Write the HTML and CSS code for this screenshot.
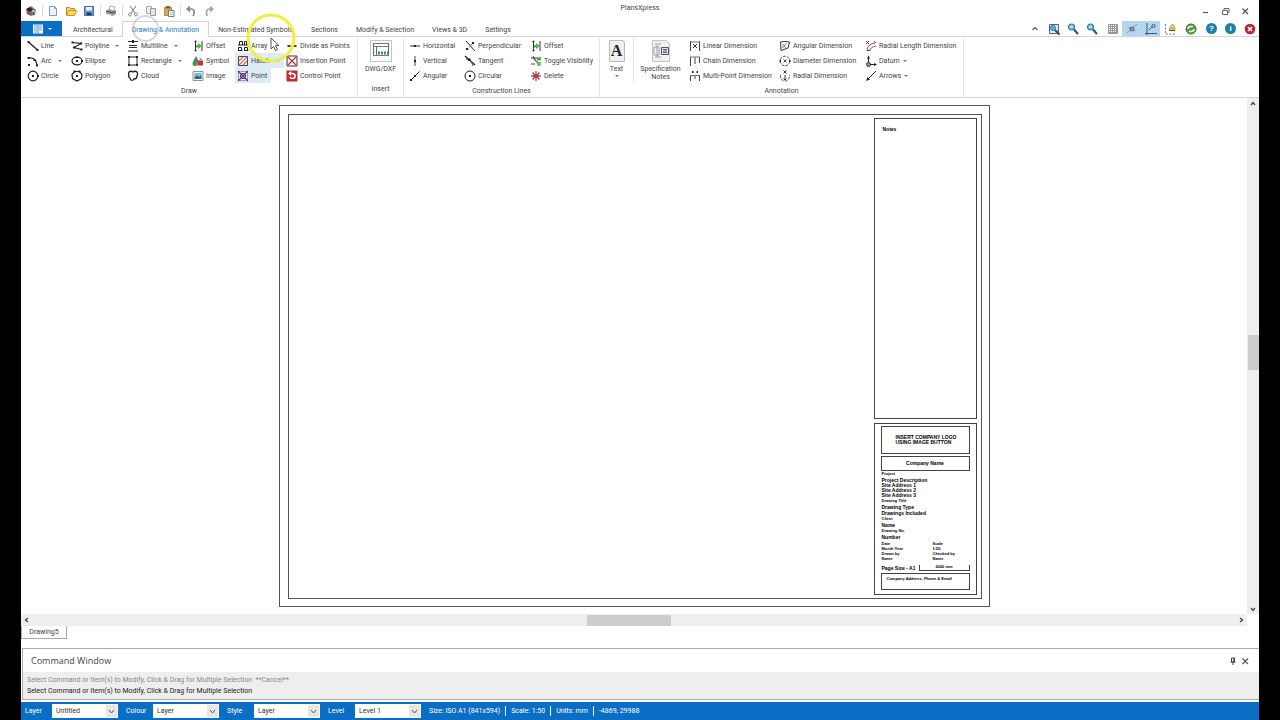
FILE: index.html
```
<!DOCTYPE html>
<html lang="en">
  <head>
    <meta charset="utf-8">
    <title>PlansXpress</title>
    <link rel="stylesheet" href="styles.css">
  </head>
  <body>
    <!-- icon sprite -->
    <svg class="sprite" aria-hidden="true">
      <symbol id="i-app" viewBox="0 0 12 12"><path d="M1 5l5-4 5 4-1 5-4 1-4-2z" fill="#77707c"/><path d="M1 4l4-2 3 3-4 2z" fill="#2c2630"/><path d="M7 5l4 1-1 4-3 1z" fill="#cfc4d8"/><path d="M2 7l3 1v2l-3-1z" fill="#a33a4c"/><path d="M7.500 7h2v3h-2z" fill="#444"/></symbol>
      <symbol id="i-new" viewBox="0 0 12 12"><path d="M2.500 1.500h5l2 2v7h-7z" fill="#eef5fc" stroke="#7f9fc0"/><path d="M7.500 1.500v2h2" fill="none" stroke="#7f9fc0"/></symbol>
      <symbol id="i-open" viewBox="0 0 12 12"><path d="M1.500 10V2.500h3l1 1h4v2" fill="#f5d77a" stroke="#b98c25"/><path d="M1.500 10.500l2-5h8l-2 5z" fill="#ffd65c" stroke="#c4932a"/></symbol>
      <symbol id="i-save" viewBox="0 0 12 12"><path d="M1.500 1.500h9v9h-9z" fill="#6d9fce" stroke="#44719f"/><path d="M3 2h6v3.500H3z" fill="#e9f1f8"/><path d="M3.500 7.500h5V10h-5z" fill="#1c3f66"/></symbol>
      <symbol id="i-print" viewBox="0 0 12 12"><path d="M4 5l1-4 5 1-1 4z" fill="#fff" stroke="#999" stroke-width=".8"/><path d="M1 6l3-2 7 2v3l-3 2-7-2z" fill="#9a9ea6"/><path d="M1 6l7 2 3-2" fill="none" stroke="#444"/><path d="M2 9l4 1.500" stroke="#eee"/></symbol>
      <symbol id="i-cut" viewBox="0 0 12 12"><path d="M3 1l5 7M9 1L4 8" stroke="#8b8f94" stroke-width="1.200"/><circle cx="3" cy="9.500" r="1.500" fill="none" stroke="#888"/><circle cx="9" cy="9.500" r="1.500" fill="none" stroke="#888"/></symbol>
      <symbol id="i-copy" viewBox="0 0 12 12"><path d="M1.500 1.500h5v7h-5z" fill="#eee" stroke="#aaa"/><path d="M5.500 3.500h5v7h-5z" fill="#e6e6ea" stroke="#999"/></symbol>
      <symbol id="i-paste" viewBox="0 0 12 12"><path d="M1.500 2.500h7v8h-7z" fill="#e3a93a" stroke="#b08a3a"/><path d="M3 1h4v2.500H3z" fill="#666"/><path d="M5.500 5.500h5.500v6H5.500z" fill="#fff" stroke="#5b7fa8"/><path d="M7 7.500h3M7 9.500h3" stroke="#8ba8c8" stroke-width=".7"/></symbol>
      <symbol id="i-undo" viewBox="0 0 12 12"><path d="M2 4h4q4 0 3 5l-1 2" fill="none" stroke="#85898f" stroke-width="1.700"/><path d="M1 4l4-3.500v7z" fill="#85898f"/></symbol>
      <symbol id="i-redo" viewBox="0 0 12 12"><path d="M10 4H7Q2 4 4 11" fill="none" stroke="#a2a5aa" stroke-width="1.700"/><path d="M11 4L7 .5v7z" fill="#a2a5aa"/></symbol>
      <symbol id="i-min" viewBox="0 0 12 12"><path d="M4 7.500h5" stroke="#555" stroke-width="1.200"/></symbol>
      <symbol id="i-restore" viewBox="0 0 12 12"><path d="M3.500 5.500h5v4h-5zM5 5V3.500h5v4H9" fill="none" stroke="#666"/></symbol>
      <symbol id="i-x" viewBox="0 0 12 12"><path d="M3.500 3.500l5.500 5.500M9 3.500L3.500 9" stroke="#555" stroke-width="1.200"/></symbol>

      <symbol id="i-line" viewBox="0 0 12 12"><path d="M1.500 2l9 8" stroke="#222" stroke-width="1.300"/><path d="M.5 1h2v2h-2zM9.500 9h2v2h-2z" fill="#222"/></symbol>
      <symbol id="i-arc" viewBox="0 0 12 12"><path d="M1.500 3Q9 2 10 10" fill="none" stroke="#222" stroke-width="1.300"/><path d="M.5 2h2v2h-2zM6.500 4h2v2h-2zM9 9.500h2v2H9zM1 9h2v2H1z" fill="#222"/></symbol>
      <symbol id="i-circle" viewBox="0 0 12 12"><circle cx="6" cy="6" r="4.800" fill="none" stroke="#222" stroke-width="1.200"/><path d="M5 5h2v2H5zM10 5h2v2h-2z" fill="#222"/></symbol>
      <symbol id="i-polyline" viewBox="0 0 12 12"><path d="M1.500 2.500l8.500 1-7 4 7.500 2" fill="none" stroke="#222" stroke-width="1.200"/><path d="M.5 1.500h2v2h-2zM9 2.500h2v2H9zM2 6.500h2v2H2zM9.500 8.500h2v2h-2z" fill="#222"/></symbol>
      <symbol id="i-ellipse" viewBox="0 0 12 12"><ellipse cx="6" cy="6" rx="5" ry="3.800" fill="none" stroke="#222" stroke-width="1.200"/><path d="M5 5h2v2H5zM5 1.500h2v1.500H5zM10 5h2v2h-2z" fill="#222"/></symbol>
      <symbol id="i-polygon" viewBox="0 0 12 12"><path d="M3.500 1.500h5l2.500 3-.5 4L6 11 1.500 8.500 1 4.500z" fill="none" stroke="#222" stroke-width="1.200"/><path d="M5 5h2v2H5zM7.500.5h2v2h-2zM2.500.5h2v2h-2z" fill="#222"/></symbol>
      <symbol id="i-multiline" viewBox="0 0 12 12"><path d="M1 1.500h10M2 5.500h8M2 7.500h8M1 11h10" stroke="#333"/><path d="M5 0h2v3H5z" fill="#222"/></symbol>
      <symbol id="i-rect" viewBox="0 0 12 12"><path d="M2 2h8v8H2z" fill="none" stroke="#222"/><path d="M1 1h2v2H1zM9 1h2v2H9zM1 9h2v2H1zM9 9h2v2H9z" fill="#222"/></symbol>
      <symbol id="i-cloud" viewBox="0 0 12 12"><path d="M2 2q2-1.500 4 0 2-1.500 4 0 1 2 0 4 0 3-3 3-1 2-3 1-1-1-1-2-2-1-1-3-1-1 0-3z" fill="none" stroke="#222" stroke-width="1.300"/></symbol>
      <symbol id="i-offset" viewBox="0 0 12 12"><path d="M3.500 1v10M10 1v10" stroke="#333"/><path d="M2 2l1.500-1.500L5 2M2 10l1.500 1.500L5 10" fill="none" stroke="#555" stroke-width=".7"/><path d="M4 5h2V3l4 3-4 3V7.500H4z" fill="#4cb84a"/></symbol>
      <symbol id="i-symbol" viewBox="0 0 12 12"><path d="M4 1l3 6H1z" fill="#3f72c4"/><circle cx="3" cy="8.500" r="2.500" fill="#3e9c42"/><path d="M5.500 5.500h5.500v5H5.500z" fill="#cc2f3c"/><path d="M7 2.500l3 1.500-1 2z" fill="#888"/></symbol>
      <symbol id="i-image" viewBox="0 0 12 12"><path d="M1 1.500h10v9H1z" fill="#f0f4f8" stroke="#89939c"/><path d="M2.500 3h7v6h-7z" fill="#79b8e0"/><path d="M2.500 9V7L5 5.500 7 7l2.500-2v4z" fill="#2c6a7c"/></symbol>
      <symbol id="i-array" viewBox="0 0 12 12"><path d="M2.500 5V1.500h3V5M7.500 5V1.500h2V5M1.500 10.500V7.500h3v3zM7.500 10.500V7.500h3v3z" fill="none" stroke="#222"/><path d="M1 4.500h10v1H1zM1 10h4.500v1H1zM7 10h4.500v1H7z" fill="#222"/></symbol>
      <symbol id="i-hatch" viewBox="0 0 12 12"><path d="M1.500 1.500h9v9h-9z" fill="#fff" stroke="#444"/><path d="M2 6l4-4M2 10l8-8M6 10l4-4" stroke="#d06a6a" stroke-width="1.200"/></symbol>
      <symbol id="i-point" viewBox="0 0 12 12"><path d="M1.500 1.500h9v9h-9z" fill="none" stroke="#8a6aa0" stroke-dasharray="2 1"/><path d="M1 1l10 10M11 1L1 11" stroke="#6b3474" stroke-width="1.200"/><circle cx="6" cy="6" r="2.500" fill="none" stroke="#3a2548"/></symbol>
      <symbol id="i-divide" viewBox="0 0 12 12"><path d="M1 6h10" stroke="#333"/><path d="M2 5h2v2H2zM8 5h2v2H8z" fill="#5b3434"/></symbol>
      <symbol id="i-insertion" viewBox="0 0 12 12"><path d="M1 1h10v10H1z" fill="#fff" stroke="#333"/><path d="M2 2l8 8M10 2l-8 8" stroke="#c9302c" stroke-width="1.200"/></symbol>
      <symbol id="i-control" viewBox="0 0 12 12"><path d="M.5.5h11v11H.5z" fill="#c9252b"/><path d="M5 3.500h1.500a2.500 2.500 0 0 1 0 5q-2 0-2.500-1.500" fill="none" stroke="#fff" stroke-width="1.600"/><path d="M2 3.500l3-2.500v5z" fill="#fff"/></symbol>

      <symbol id="i-horizontal" viewBox="0 0 12 12"><path d="M1 6h10" stroke="#333"/><path d="M5 5h2v2H5z" fill="#222"/></symbol>
      <symbol id="i-vertical" viewBox="0 0 12 12"><path d="M6 1v10" stroke="#444"/><path d="M5 5h2v2H5z" fill="#222"/></symbol>
      <symbol id="i-angular" viewBox="0 0 12 12"><path d="M1.500 10.500l9-9" stroke="#222"/><path d="M5 5h2v2H5zM1 9h2v2H1z" fill="#222"/></symbol>
      <symbol id="i-perp" viewBox="0 0 12 12"><path d="M2 1l9 10" stroke="#222"/><path d="M3.500 10L9 2" stroke="#555" stroke-dasharray="1.500 1.500"/><path d="M2 8h2v2H2zM8 2h2v2H8z" fill="#222"/></symbol>
      <symbol id="i-tangent" viewBox="0 0 12 12"><path d="M1 1l10 9" stroke="#222" stroke-width="1.300"/><path d="M2 4q5 0 7 7" fill="none" stroke="#555"/><path d="M4 3.500h2.500V6H4z" fill="#222"/></symbol>
      <symbol id="i-circular" viewBox="0 0 12 12"><circle cx="6" cy="6" r="5" fill="none" stroke="#222"/><path d="M5 5h2v2H5z" fill="#222"/></symbol>
      <symbol id="i-toggle" viewBox="0 0 12 12"><path d="M1 3h10M3 1l2 4" stroke="#333"/><path d="M4 4l6 6M7 4.500h4" stroke="#349a34" stroke-width="1.500"/><path d="M1 9h4" stroke="#444"/><circle cx="9" cy="9" r="2.200" fill="#6fc25d"/></symbol>
      <symbol id="i-delete" viewBox="0 0 12 12"><path d="M6 1v10M1 6h10" stroke="#333"/><path d="M2.500 2.500l7 7M9.500 2.500l-7 7M3 6h6" stroke="#cc2b36" stroke-width="1.400"/></symbol>

      <symbol id="i-linear" viewBox="0 0 12 12"><path d="M1.500 1v10M10.500 1v10" stroke="#444"/><path d="M1.500 2h9" stroke="#866"/><path d="M4 4l4 4M8 4L4 8" stroke="#333"/></symbol>
      <symbol id="i-chain" viewBox="0 0 12 12"><path d="M1.500 2v9M6 2v7M10.500 2v6" stroke="#444"/><path d="M1 2h10" stroke="#866"/></symbol>
      <symbol id="i-multi" viewBox="0 0 12 12"><path d="M1.500 5v6M6 5v4M10.500 5v6" stroke="#444"/><path d="M1 5.500h10" stroke="#866"/><path d="M3 1h1.500v2H3zM7.500 1H9v2H7.500z" fill="#222"/></symbol>
      <symbol id="i-angdim" viewBox="0 0 12 12"><path d="M1.500 2Q6 1 10.500 2L9 8l-7 2.500z" fill="none" stroke="#333"/><path d="M4 4v4M7.500 3.500L5 6l2 2" fill="none" stroke="#555" stroke-width=".8"/></symbol>
      <symbol id="i-diameter" viewBox="0 0 12 12"><circle cx="6" cy="6" r="4.800" fill="none" stroke="#555" stroke-dasharray="3 1"/><path d="M4.500 4.500l3 3M7.500 4.500l-3 3" stroke="#222" stroke-width=".8"/><path d="M0 6l2-1.500v3zM12 6l-2-1.500v3z" fill="#222"/></symbol>
      <symbol id="i-radial" viewBox="0 0 12 12"><path d="M1.500 5q0 6 4.500 6t4.500-6" fill="none" stroke="#655" stroke-dasharray="3 1"/><path d="M4.500.5l3 3M7.500.5l-3 3M6 5v5M4.500 8.500L6 10l1.500-1.500" fill="none" stroke="#222" stroke-width=".9"/></symbol>
      <symbol id="i-radlen" viewBox="0 0 12 12"><path d="M2 11q0-7 8-8M5 11q0-4 6-5" fill="none" stroke="#a45"/><path d="M1 1l3 3M4 1L1 4M9 1l2 2M2 11l3-1" stroke="#333" stroke-width=".9"/></symbol>
      <symbol id="i-datum" viewBox="0 0 12 12"><path d="M3.500 1v8.500H11" fill="none" stroke="#222"/><path d="M2 3.500L3.500.5 5 3.500zM9 8l3 1.500L9 11z" fill="#222"/><circle cx="3.500" cy="9.500" r="2" fill="#8c8cc0" stroke="#336"/></symbol>
      <symbol id="i-arrows" viewBox="0 0 12 12"><path d="M2 10l9-9" stroke="#222"/><path d="M1 11l1.500-4L5 9.500z" fill="#222"/></symbol>

      <symbol id="i-dwg" viewBox="0 0 22 22"><path d="M.5.5h21v21H.5z" fill="#fafafa" stroke="#c4c4c4"/><path d="M3 3.500h16M3 6.500h16" stroke="#777"/><path d="M3.500 3v12M6.500 6v9M18.500 3v12" stroke="#666"/><path d="M8 13h10" stroke="#3c9a50" stroke-width="3" stroke-dasharray="2 1"/><path d="M3 15.500h16" stroke="#777"/></symbol>
      <symbol id="i-spec" viewBox="0 0 22 22"><path d="M2.500.5h14l3 3v18h-17z" fill="#f0f0f0" stroke="#c4c4c4"/><path d="M5 4h6M5 17h6M7 5v12M4 7h5v8H4z" fill="none" stroke="#a2a2a2"/><path d="M11.500 7.500h7v7h-7z" fill="#dfe3ea" stroke="#556"/><path d="M13 9.500h4M13 11h4M13 12.500h4" stroke="#667"/></symbol>

      <symbol id="i-menu" viewBox="0 0 12 12"><path d="M1 1.500h10v9H1z" fill="#fff"/><path d="M2 3h3M2 5h3M2 7h3M2 9h3M7 3h3M7 5h3M7 7h3" stroke="#3c86c4" stroke-width=".8"/><path d="M6 1.500v9" stroke="#3c86c4"/></symbol>
      <symbol id="i-chevron" viewBox="0 0 12 12"><path d="M3.500 7L6 4.500 8.500 7" fill="none" stroke="#555" stroke-width="1.200"/></symbol>
      <symbol id="i-zoomwin" viewBox="0 0 12 12"><path d="M1.500 1.500h9v9h-9z" fill="#d9ecf7" stroke="#4b6477"/><circle cx="5" cy="5" r="2.500" fill="#5fb0dc" stroke="#2f7cab"/><path d="M7 7l4.500 4.500" stroke="#33505f" stroke-width="2"/></symbol>
      <symbol id="i-zoom" viewBox="0 0 12 12"><circle cx="4.500" cy="4" r="3" fill="#79c0e4" stroke="#2f7cab" stroke-width="1.200"/><path d="M3 4h3" stroke="#fff"/><path d="M7 6.500l4 4.500" stroke="#33505f" stroke-width="2"/></symbol>
      <symbol id="i-grid" viewBox="0 0 12 12"><path d="M1.500 1.500h9v9h-9zM3.500 1v10M5.500 1v10M7.500 1v10M9.500 1v10M1 3.500h10M1 5.500h10M1 7.500h10M1 9.500h10" fill="none" stroke="#888" stroke-width=".8"/></symbol>
      <symbol id="i-snap" viewBox="0 0 12 12"><path d="M1 10l10-9M1.500 4l8 4" stroke="#6c8296" stroke-width=".8"/><circle cx="6" cy="6" r="2" fill="none" stroke="#44566a"/></symbol>
      <symbol id="i-ortho" viewBox="0 0 12 12"><path d="M2 0v10.500h10" fill="none" stroke="#3e5872"/><path d="M0 10.500h2V12M4 7l3-3" stroke="#3e5872" fill="none"/><circle cx="8.500" cy="3" r="1.600" fill="none" stroke="#3e5872"/></symbol>
      <symbol id="i-lock" viewBox="0 0 12 12"><path d="M1.500 1v10H11" fill="none" stroke="#777" stroke-dasharray="2 1.500"/><path d="M7 4V2.500q1.500-2 3 0V4" fill="none" stroke="#777"/><path d="M5 4h6.500v4H5z" fill="#e2b83c"/><path d="M5 7.500h6" stroke="#555"/></symbol>
      <symbol id="i-refresh" viewBox="0 0 12 12"><circle cx="6" cy="6" r="5" fill="#4f9a3c" stroke="#3a7a2c"/><path d="M3 6q0-2.500 3-2.500h2M9 6q0 2.500-3 2.500H4" fill="none" stroke="#fff" stroke-width="1.400"/></symbol>
      <symbol id="i-exit" viewBox="0 0 12 12"><circle cx="6" cy="6" r="5.300" fill="#bf1f35"/><path d="M4 4l4 4M8 4L4 8" stroke="#fff" stroke-width="1.700"/></symbol>
      <symbol id="i-pin" viewBox="0 0 12 12"><path d="M4.500 3h3v4h-3zM3.500 7h5M6 7v3M6.800 3v4" fill="none" stroke="#444"/></symbol>
      <symbol id="i-up" viewBox="0 0 12 12"><path d="M4 7L6 4.500 8 7" fill="none" stroke="#444" stroke-width="1.300"/></symbol>
      <symbol id="i-down" viewBox="0 0 12 12"><path d="M4 6l2 2.500L8 6" fill="none" stroke="#444" stroke-width="1.300"/></symbol>
      <symbol id="i-left" viewBox="0 0 12 12"><path d="M7 4L4.500 6 7 8" fill="none" stroke="#444" stroke-width="1.300"/></symbol>
      <symbol id="i-right" viewBox="0 0 12 12"><path d="M5 4l2.500 2L5 8" fill="none" stroke="#444" stroke-width="1.300"/></symbol>
    </svg>

    <div class="app">
      <header class="titlebar">
        <div class="quick">
          <button class="tool" aria-label="PlansXpress"><svg><use href="#i-app"/></svg></button>
          <span class="sep line"></span>
          <button class="tool" aria-label="New"><svg><use href="#i-new"/></svg></button>
          <button class="tool" aria-label="Open"><svg><use href="#i-open"/></svg></button>
          <button class="tool" aria-label="Save"><svg><use href="#i-save"/></svg></button>
          <span class="sep line"></span>
          <button class="tool" aria-label="Print"><svg><use href="#i-print"/></svg></button>
          <span class="sep line"></span>
          <button class="tool" aria-label="Cut"><svg><use href="#i-cut"/></svg></button>
          <button class="tool" aria-label="Copy"><svg><use href="#i-copy"/></svg></button>
          <button class="tool" aria-label="Paste"><svg><use href="#i-paste"/></svg></button>
          <span class="sep line"></span>
          <button class="tool" aria-label="Undo"><svg><use href="#i-undo"/></svg></button>
          <button class="tool" aria-label="Redo"><svg><use href="#i-redo"/></svg></button>
        </div>
        <h1 class="title">PlansXpress</h1>
        <div class="window-buttons">
          <button aria-label="Minimise"><svg><use href="#i-min"/></svg></button>
          <button aria-label="Restore"><svg><use href="#i-restore"/></svg></button>
          <button aria-label="Close"><svg><use href="#i-x"/></svg></button>
        </div>
      </header>

      <nav class="tabs">
        <button class="file" aria-label="File menu"><svg><use href="#i-menu"/></svg><span class="caret"></span></button>
        <button class="tab">Architectural</button>
        <button class="tab active">Drawing &amp; Annotation</button>
        <button class="tab">Non-Estimated Symbols</button>
        <button class="tab">Sections</button>
        <button class="tab">Modify &amp; Selection</button>
        <button class="tab">Views &amp; 3D</button>
        <button class="tab">Settings</button>
        <div class="view-tools">
          <button aria-label="Collapse ribbon"><svg><use href="#i-chevron"/></svg></button>
          <button aria-label="Zoom window"><svg><use href="#i-zoomwin"/></svg></button>
          <button aria-label="Zoom extents"><svg><use href="#i-zoom"/></svg></button>
          <button aria-label="Zoom previous"><svg><use href="#i-zoom"/></svg></button>
          <span class="sep"></span>
          <button aria-label="Grid"><svg><use href="#i-grid"/></svg></button>
          <button class="on" aria-label="Snap"><svg><use href="#i-snap"/></svg></button>
          <button class="on" aria-label="Ortho"><svg><use href="#i-ortho"/></svg></button>
          <button aria-label="Lock"><svg><use href="#i-lock"/></svg></button>
          <span class="sep"></span>
          <button aria-label="Refresh"><svg><use href="#i-refresh"/></svg></button>
          <span class="sep"></span>
          <button aria-label="Help"><span class="round">?</span></button>
          <button aria-label="Info"><span class="round">i</span></button>
          <button aria-label="Exit"><svg><use href="#i-exit"/></svg></button>
        </div>
      </nav>

      <section class="ribbon">
        <div class="group">
          <div class="cmds draw">
            <button><svg><use href="#i-line"/></svg>Line</button>
            <button><svg><use href="#i-arc"/></svg>Arc<span class="caret"></span></button>
            <button><svg><use href="#i-circle"/></svg>Circle</button>
            <button><svg><use href="#i-polyline"/></svg>Polyline<span class="caret"></span></button>
            <button><svg><use href="#i-ellipse"/></svg>Ellipse</button>
            <button><svg><use href="#i-polygon"/></svg>Polygon</button>
            <button><svg><use href="#i-multiline"/></svg>Multiline<span class="caret"></span></button>
            <button><svg><use href="#i-rect"/></svg>Rectangle<span class="caret"></span></button>
            <button><svg><use href="#i-cloud"/></svg>Cloud</button>
            <button><svg><use href="#i-offset"/></svg>Offset</button>
            <button><svg><use href="#i-symbol"/></svg>Symbol</button>
            <button><svg><use href="#i-image"/></svg>Image</button>
            <button><svg><use href="#i-array"/></svg>Array</button>
            <button class="hot"><svg><use href="#i-hatch"/></svg>Hatch<span class="caret"></span></button>
            <button class="hot"><svg><use href="#i-point"/></svg>Point</button>
            <button><svg><use href="#i-divide"/></svg>Divide as Points</button>
            <button><svg><use href="#i-insertion"/></svg>Insertion Point</button>
            <button><svg><use href="#i-control"/></svg>Control Point</button>
          </div>
          <div class="group-name">Draw</div>
        </div>

        <div class="group">
          <button class="large dwg"><svg><use href="#i-dwg"/></svg>DWG/DXF</button>
          <div class="group-name">Insert</div>
        </div>

        <div class="group">
          <div class="cmds construct">
            <button><svg><use href="#i-horizontal"/></svg>Horizontal</button>
            <button><svg><use href="#i-vertical"/></svg>Vertical</button>
            <button><svg><use href="#i-angular"/></svg>Angular</button>
            <button><svg><use href="#i-perp"/></svg>Perpendicular</button>
            <button><svg><use href="#i-tangent"/></svg>Tangent</button>
            <button><svg><use href="#i-circular"/></svg>Circular</button>
            <button><svg><use href="#i-offset"/></svg>Offset</button>
            <button><svg><use href="#i-toggle"/></svg>Toggle Visibility</button>
            <button><svg><use href="#i-delete"/></svg>Delete</button>
          </div>
          <div class="group-name">Construction Lines</div>
        </div>

        <div class="group">
          <div class="annotate">
            <button class="large text"><span class="letter" aria-hidden="true">A</span>Text<span class="caret"></span></button>
            <button class="large spec"><svg><use href="#i-spec"/></svg>Specification<br>Notes</button>
            <div class="cmds dims">
              <button><svg><use href="#i-linear"/></svg>Linear Dimension</button>
              <button><svg><use href="#i-chain"/></svg>Chain Dimension</button>
              <button><svg><use href="#i-multi"/></svg>Multi-Point Dimension</button>
              <button><svg><use href="#i-angdim"/></svg>Angular Dimension</button>
              <button><svg><use href="#i-diameter"/></svg>Diameter Dimension</button>
              <button><svg><use href="#i-radial"/></svg>Radial Dimension</button>
              <button><svg><use href="#i-radlen"/></svg>Radial Length Dimension</button>
              <button><svg><use href="#i-datum"/></svg>Datum<span class="caret"></span></button>
              <button><svg><use href="#i-arrows"/></svg>Arrows<span class="caret"></span></button>
            </div>
          </div>
          <div class="group-name">Annotation</div>
        </div>
      </section>

      <main class="workspace">
        <div class="canvas">
          <div class="sheet">
            <div class="frame">
              <div class="side">
                <div class="notes">Notes</div>
                <div class="block">
                  <div class="logo-box">INSERT COMPANY LOGO<br>USING IMAGE BUTTON</div>
                  <div class="company">Company Name</div>
                  <p class="tiny">Project</p>
                  <p class="big">Project Description</p>
                  <p class="site">Site Address 1</p>
                  <p class="site">Site Address 2</p>
                  <p class="site">Site Address 3</p>
                  <p class="tiny">Drawing Title</p>
                  <p>Drawing Type</p>
                  <p>Drawings Included</p>
                  <p class="tiny">Client</p>
                  <p>Name</p>
                  <p class="tiny">Drawing No.</p>
                  <p class="big">Number</p>
                  <div class="pairs">
                    <span>Date</span><span>Scale</span>
                    <span>Month Year</span><span>1:50</span>
                    <span>Drawn by</span><span>Checked by</span>
                    <span>Name</span><span>Name</span>
                  </div>
                  <div class="page-size">Page Size - A1<span class="scale">2000 mm</span></div>
                  <div class="address">Company Address, Phone &amp; Email</div>
                </div>
              </div>
            </div>
          </div>
        </div>
        <div class="vbar">
          <svg><use href="#i-up"/></svg>
          <span class="thumb"></span>
          <svg><use href="#i-down"/></svg>
        </div>
        <div class="hbar">
          <svg><use href="#i-left"/></svg>
          <span class="thumb"></span>
          <svg><use href="#i-right"/></svg>
        </div>
      </main>

      <div class="docs"><button class="doc">Drawing5</button></div>

      <section class="command">
        <div class="command-head">
          <h2>Command Window</h2>
          <button aria-label="Pin"><svg><use href="#i-pin"/></svg></button>
          <button aria-label="Close command window"><svg><use href="#i-x"/></svg></button>
        </div>
        <div class="log">
          <p class="old">Select Command or Item(s) to Modify, Click &amp; Drag for Multiple Selection&nbsp; **Cancel**</p>
          <p>Select Command or Item(s) to Modify, Click &amp; Drag for Multiple Selection</p>
        </div>
      </section>

      <footer class="status">
        <label for="layer">Layer</label>
        <select id="layer"><option>Untitled</option></select>
        <label for="colour">Colour</label>
        <select id="colour"><option>Layer</option></select>
        <label for="style">Style</label>
        <select id="style"><option>Layer</option></select>
        <label for="level">Level</label>
        <select id="level"><option>Level 1</option></select>
        <span class="info">Size: ISO A1 (841x594)</span>
        <span class="info">Scale: 1:50</span>
        <span class="info">Units: mm</span>
        <span class="info">-4869, 29988</span>
      </footer>

      <!-- mouse pointer with its click highlight -->
      <span class="ripple"></span>
      <svg class="pointer" viewBox="0 0 50 50"><circle cx="25" cy="25" r="23" fill="none" stroke="#f3ee3c" stroke-width="3"/><path d="M25 25v11l2.500-2.500 2 4 2-1-2-4h3.500z" fill="#fff" stroke="#555"/></svg>
    </div>
  </body>
</html>
```
FILE: styles.css
```
* {
  box-sizing: border-box;
}

body {
  margin: 0;
  padding: 0 21px;
  background: #000;
  color: #444;
  font-family: Roboto, "Liberation Sans", sans-serif;
  font-size: 7px;
}

h1,
h2,
p {
  margin: 0;
  font-weight: inherit;
}

button,
select {
  margin: 0;
  padding: 0;
  border: none;
  background: none;
  color: inherit;
  font: inherit;
}

button {
  display: flex;
  align-items: center;
  justify-content: center;
  white-space: nowrap;
}

svg {
  width: 12px;
  height: 12px;
  flex: none;
}

.sprite {
  position: absolute;
  width: 0;
  height: 0;
}

.caret {
  border: 2px solid transparent;
  border-top-color: #777;
  border-bottom: none;
  margin-left: 4px;
}

.app {
  position: relative;
  display: flex;
  flex-direction: column;
  height: 100vh;
  background: #fff;
}

/* title bar */
.titlebar {
  display: grid;
  grid-template-columns: 1fr auto 1fr;
  height: 21px;
}

.quick {
  display: flex;
  padding-left: 1px;
}

.tool {
  width: 18px;
}

.sep {
  width: 2px;
}

.sep.line {
  width: 1px;
  margin: 5px 1px 5px 2px;
  background: #ddd;
}

.title {
  font-size: 7px;
  line-height: 16px;
}

.window-buttons {
  display: flex;
  justify-content: flex-end;
  padding-right: 4px;
}

.window-buttons button {
  width: 20px;
}

/* tabs */
.tabs {
  display: flex;
  height: 16px;
  border-bottom: 1px solid #d4d4d4;
}

.file {
  width: 41px;
  height: 15px;
  margin-right: 2px;
  background: #0a6fc4;
}

.file .caret {
  border-top-color: #fff;
}

.tab {
  height: 16px;
  padding: 0 8px;
  border: 1px solid transparent;
  border-bottom: none;
}

.tab.active {
  padding: 0 9px;
  border-color: #d4d4d4;
  background: #fff;
  color: #1a7dbb;
}

.view-tools {
  display: flex;
  margin-left: auto;
}

.view-tools button {
  width: 19px;
}

.view-tools .on {
  background: #b5d6f0;
}

.round {
  width: 11px;
  border-radius: 50%;
  background: #1c7fa8;
  color: #fff;
  font: bold 8px/11px "Liberation Sans", sans-serif;
}

/* ribbon */
.ribbon {
  display: flex;
  height: 61px;
  padding-top: 1px;
  border-bottom: 1px solid #d4d4d4;
}

.group {
  display: flex;
  flex-direction: column;
  border-right: 1px solid #e4e4e4;
}

.group-name {
  line-height: 16px;
  text-align: center;
}

.cmds {
  display: grid;
  grid-template-rows: repeat(3, 15px);
  grid-auto-flow: column;
}

.cmds button {
  justify-content: flex-start;
  justify-self: start;
  gap: 2px;
  padding: 0 4px 0 2px;
}

.cmds .hot {
  background: #dcebf7;
}

.draw {
  grid-template-columns: 44px 56px 65px 45px 49px 73px;
  padding-left: 4px;
}

.construct {
  grid-template-columns: 55px 66px 71px;
  padding-left: 3px;
}

.dims {
  grid-template-columns: 90px 86px 100px;
}

.dims .caret {
  margin-left: 1px;
}

.annotate {
  display: flex;
}

.large {
  flex-direction: column;
  justify-content: flex-start;
  height: 45px;
  padding-top: 2px;
  line-height: 8px;
}

.large svg,
.letter {
  width: 22px;
  height: 22px;
  margin-bottom: 3px;
}

.letter {
  width: 16px;
  border: 1px solid #bbb;
  border-radius: 0 3px 0 0;
  background: #f0f0f0;
  color: #222;
  font: bold 16px/20px "Liberation Serif", serif;
  text-align: center;
}

.large .caret {
  margin: 2px 0 0;
}

.dwg {
  width: 45px;
}

.text {
  width: 34px;
  border-right: 1px solid #e4e4e4;
}

.spec {
  width: 53px;
}

/* drawing area */
.workspace {
  flex: 1;
  display: grid;
  grid-template: 1fr 12px / 1fr 12px;
  min-height: 0;
}

.canvas {
  display: flex;
  justify-content: center;
  min-height: 0;
  padding: 7px 0;
}

.sheet {
  height: 100%;
  aspect-ratio: 711 / 502;
  padding: 8px 7px 7px 8px;
  border: 1px solid #555;
}

.frame {
  display: flex;
  justify-content: flex-end;
  height: 100%;
  padding: 3px 4px;
  border: 1px solid #555;
}

.side {
  display: flex;
  flex-direction: column;
  gap: 4px;
  width: 103px;
  color: #000;
  font: bold 5px "Liberation Sans", sans-serif;
}

.notes {
  flex: 1;
  padding: 7px 8px;
  border: 1px solid #444;
}

.block {
  padding: 2px 7px 4px;
  border: 1px solid #444;
  line-height: 6px;
}

.logo-box,
.company,
.address {
  margin: 0 -1px;
  border: 1px solid #444;
}

.logo-box {
  height: 28px;
  padding: 8px 14px;
  line-height: 5px;
  white-space: nowrap;
}

.company {
  height: 15px;
  margin-top: 2px;
  line-height: 13px;
  text-align: center;
}

.tiny {
  font-size: 4px;
}

.big {
  font-size: 5px;
}

.site {
  line-height: 5px;
}

.pairs {
  display: grid;
  grid-template-columns: 51px 1fr;
  margin-top: 1px;
  font-size: 4px;
  line-height: 5px;
}

.page-size {
  display: flex;
  justify-content: space-between;
  margin: 4px 0 2px;
  line-height: 6px;
  white-space: nowrap;
}

.scale {
  width: 51px;
  margin-right: -1px;
  border: 1px solid #444;
  border-top: none;
  font-size: 4px;
  line-height: 4px;
  text-align: center;
}

.address {
  height: 17px;
  padding: 3px 5px;
  font-size: 4px;
  line-height: 4px;
}

.vbar,
.hbar {
  display: flex;
  align-items: center;
  justify-content: space-between;
  background: #eee;
}

.vbar {
  flex-direction: column;
}

.thumb {
  background: #cdcdcd;
}

.vbar .thumb {
  width: 11px;
  height: 35px;
  margin-bottom: 8px;
}

.hbar .thumb {
  width: 84px;
  height: 11px;
  margin-right: 10px;
}

/* document tabs */
.docs {
  height: 22px;
}

.doc {
  width: 46px;
  height: 13px;
  border: 1px solid #aaa;
  border-top: none;
}

/* command window */
.command {
  height: 52px;
  margin: 0 0 2px 1px;
  border: 1px solid #aaa;
  border-right: none;
}

.command-head {
  display: flex;
  height: 23px;
  padding: 0 8px;
}

.command-head h2 {
  flex: 1;
  font: 9px/23px "Open Sans", sans-serif;
}

.log {
  height: 27px;
  padding: 3px 4px;
  background: #eee;
  color: #222;
  line-height: 11px;
}

.old {
  color: #888;
}

/* status bar */
.status {
  display: flex;
  align-items: center;
  height: 18px;
  padding-left: 4px;
  background: #0a6fc4;
  color: #fff;
}

.status label {
  width: 27px;
}

.status select {
  appearance: none;
  width: 66px;
  height: 14px;
  margin-right: 8px;
  padding-left: 3px;
  border: 1px solid #fff;
  color: #333;
  background: url("data:image/svg+xml,%3Csvg xmlns='http://www.w3.org/2000/svg' width='11' height='12'%3E%3Cpath d='M0 0h11v12H0z' fill='%23e6e6e6'/%3E%3Cpath d='M3 5l2.500 3L8 5' fill='none' stroke='%23555'/%3E%3C/svg%3E") right center no-repeat #fff;
}

.info {
  line-height: 10px;
}

.info + .info {
  margin-left: 5px;
  padding-left: 5px;
  border-left: 1px solid #fff;
}

/* pointer overlay */
.ripple {
  position: absolute;
  left: 111px;
  top: 15px;
  width: 27px;
  height: 27px;
  border: 2px solid rgba(150, 150, 200, 0.4);
  border-radius: 50%;
}

.pointer {
  position: absolute;
  left: 225px;
  top: 13px;
  width: 50px;
  height: 50px;
}
```
